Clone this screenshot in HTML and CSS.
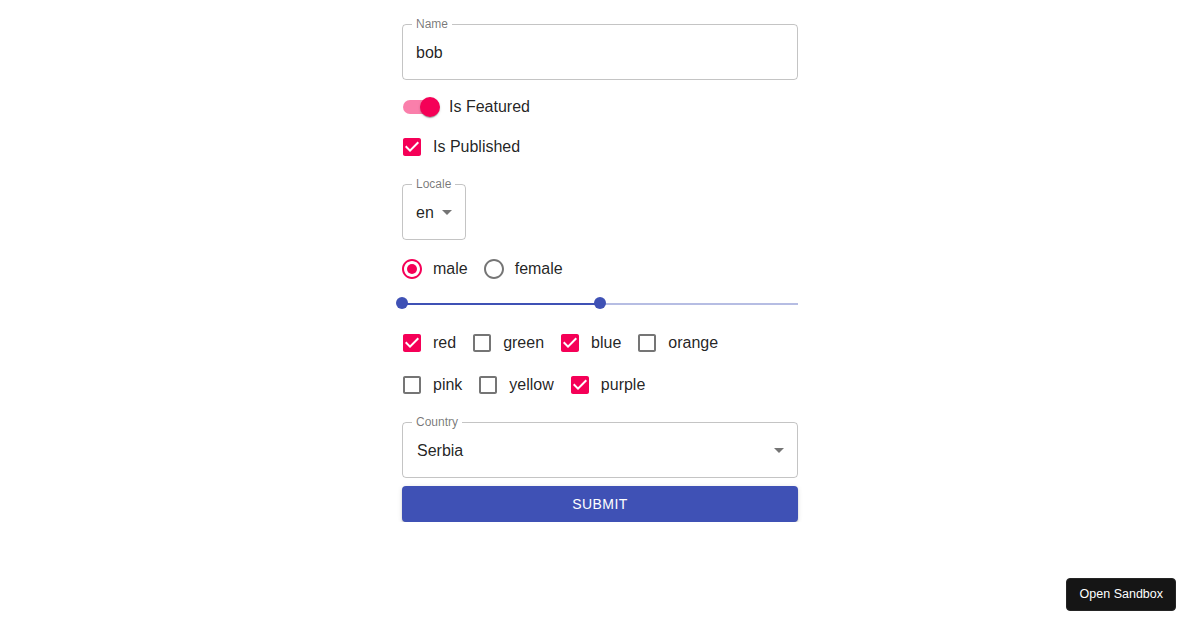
FILE: index.html
```html
<!DOCTYPE html>
<html>
<head>
<meta charset="utf-8">
<link rel="stylesheet" href="styles.css">
</head>
<body>
<form class="form">
  <div class="field">
    <span class="field-label">Name</span>
    <span class="field-value">bob</span>
  </div>

  <label class="control">
    <span class="switch"><span class="switch-track"><span class="switch-thumb"></span></span></span>
    <span class="control-text">Is Featured</span>
  </label>

  <label class="control">
    <span class="box"><svg viewBox="0 0 24 24" class="icon on"><path d="M19 3H5c-1.11 0-2 .9-2 2v14c0 1.1.89 2 2 2h14c1.11 0 2-.9 2-2V5c0-1.1-.89-2-2-2zm-9 14l-5-5 1.41-1.41L10 14.17l7.59-7.59L19 8l-9 9z"/></svg></span>
    <span class="control-text">Is Published</span>
  </label>

  <div class="field field-locale">
    <span class="field-label">Locale</span>
    <span class="field-value">en</span>
    <svg viewBox="0 0 24 24" class="arrow"><path d="M7 10l5 5 5-5z"/></svg>
  </div>

  <div class="group">
    <label class="control">
      <span class="box"><svg viewBox="0 0 24 24" class="icon on"><path d="M12 2C6.48 2 2 6.48 2 12s4.48 10 10 10 10-4.48 10-10S17.52 2 12 2zm0 18c-4.42 0-8-3.58-8-8s3.58-8 8-8 8 3.580 8 8-3.58 8-8 8z"/><circle cx="12" cy="12" r="5"/></svg></span>
      <span class="control-text">male</span>
    </label>
    <label class="control">
      <span class="box"><svg viewBox="0 0 24 24" class="icon off"><path d="M12 2C6.48 2 2 6.48 2 12s4.48 10 10 10 10-4.48 10-10S17.52 2 12 2zm0 18c-4.42 0-8-3.58-8-8s3.58-8 8-8 8 3.58 8 8-3.58 8-8 8z"/></svg></span>
      <span class="control-text">female</span>
    </label>
  </div>

  <div class="slider">
    <span class="slider-track"></span>
    <span class="slider-rail"></span>
    <span class="slider-thumb" style="left: 0%"></span>
    <span class="slider-thumb" style="left: 50%"></span>
  </div>

  <div class="group wrap">
    <label class="control">
      <span class="box"><svg viewBox="0 0 24 24" class="icon on"><path d="M19 3H5c-1.11 0-2 .9-2 2v14c0 1.1.89 2 2 2h14c1.11 0 2-.9 2-2V5c0-1.1-.89-2-2-2zm-9 14l-5-5 1.41-1.41L10 14.17l7.59-7.59L19 8l-9 9z"/></svg></span>
      <span class="control-text">red</span>
    </label>
    <label class="control">
      <span class="box"><svg viewBox="0 0 24 24" class="icon off"><path d="M19 5v14H5V5h14m0-2H5c-1.1 0-2 .9-2 2v14c0 1.1.9 2 2 2h14c1.1 0 2-.9 2-2V5c0-1.1-.9-2-2-2z"/></svg></span>
      <span class="control-text">green</span>
    </label>
    <label class="control">
      <span class="box"><svg viewBox="0 0 24 24" class="icon on"><path d="M19 3H5c-1.11 0-2 .9-2 2v14c0 1.1.89 2 2 2h14c1.11 0 2-.9 2-2V5c0-1.1-.89-2-2-2zm-9 14l-5-5 1.41-1.41L10 14.17l7.59-7.59L19 8l-9 9z"/></svg></span>
      <span class="control-text">blue</span>
    </label>
    <label class="control">
      <span class="box"><svg viewBox="0 0 24 24" class="icon off"><path d="M19 5v14H5V5h14m0-2H5c-1.1 0-2 .9-2 2v14c0 1.1.9 2 2 2h14c1.1 0 2-.9 2-2V5c0-1.1-.9-2-2-2z"/></svg></span>
      <span class="control-text">orange</span>
    </label>
    <label class="control">
      <span class="box"><svg viewBox="0 0 24 24" class="icon off"><path d="M19 5v14H5V5h14m0-2H5c-1.1 0-2 .9-2 2v14c0 1.1.9 2 2 2h14c1.1 0 2-.9 2-2V5c0-1.1-.9-2-2-2z"/></svg></span>
      <span class="control-text">pink</span>
    </label>
    <label class="control">
      <span class="box"><svg viewBox="0 0 24 24" class="icon off"><path d="M19 5v14H5V5h14m0-2H5c-1.1 0-2 .9-2 2v14c0 1.1.9 2 2 2h14c1.1 0 2-.9 2-2V5c0-1.1-.9-2-2-2z"/></svg></span>
      <span class="control-text">yellow</span>
    </label>
    <label class="control">
      <span class="box"><svg viewBox="0 0 24 24" class="icon on"><path d="M19 3H5c-1.11 0-2 .9-2 2v14c0 1.1.89 2 2 2h14c1.11 0 2-.9 2-2V5c0-1.1-.89-2-2-2zm-9 14l-5-5 1.41-1.41L10 14.17l7.59-7.59L19 8l-9 9z"/></svg></span>
      <span class="control-text">purple</span>
    </label>
  </div>

  <div class="field field-country">
    <span class="field-label">Country</span>
    <span class="field-value country-value">Serbia</span>
    <svg viewBox="0 0 24 24" class="arrow"><path d="M7 10l5 5 5-5z"/></svg>
  </div>

  <button type="button" class="submit">Submit</button>
</form>

<a class="sandbox-btn">Open Sandbox</a>
</body>
</html>
```

FILE: styles.css
```css
* { box-sizing: border-box; }

html, body {
  margin: 0;
  padding: 0;
  background: #fff;
}

body {
  font-family: "Liberation Sans", Arial, sans-serif;
  color: rgba(0, 0, 0, 0.87);
}

.form {
  width: 396px;
  margin: 0 auto;
  padding-top: 24px;
  display: flex;
  flex-direction: column;
  align-items: flex-start;
}

.field {
  position: relative;
  width: 100%;
  height: 56px;
  border: 1px solid rgba(0, 0, 0, 0.23);
  border-radius: 4px;
  padding: 0 13px;
  display: flex;
  align-items: center;
  margin-bottom: 8px;
}

.field-label {
  position: absolute;
  top: -8px;
  left: 9px;
  padding: 0 4px;
  background: #fff;
  font-size: 12px;
  line-height: 14px;
  color: rgba(0, 0, 0, 0.54);
}

.field-value {
  font-size: 16px;
  line-height: 19px;
  color: rgba(0, 0, 0, 0.87);
}

.country-value {
  padding-left: 1px;
}

.field-locale {
  width: 64px;
  margin-top: 16px;
  padding-right: 6px;
}

.field-country {
  margin-top: 16px;
  padding-right: 6px;
}

.arrow {
  width: 24px;
  height: 24px;
  margin-left: auto;
  fill: rgba(0, 0, 0, 0.54);
  flex-shrink: 0;
}

.control {
  display: inline-flex;
  align-items: center;
  margin-left: -11px;
  margin-right: 16px;
  cursor: pointer;
}

.control-text {
  font-size: 16px;
  line-height: 24px;
  color: rgba(0, 0, 0, 0.87);
}

.box {
  width: 42px;
  height: 42px;
  padding: 9px;
  display: flex;
}

.icon {
  width: 24px;
  height: 24px;
}

.icon.on { fill: #f50057; }
.icon.off { fill: rgba(0, 0, 0, 0.54); }

.switch {
  width: 58px;
  height: 38px;
  padding: 12px;
  display: flex;
  align-items: center;
}

.switch-track {
  width: 34px;
  height: 14px;
  border-radius: 7px;
  background: rgba(245, 0, 87, 0.5);
  display: flex;
  align-items: center;
  justify-content: flex-end;
}

.switch-thumb {
  width: 20px;
  height: 20px;
  border-radius: 50%;
  background: #f50057;
  flex-shrink: 0;
  margin-right: -3px;
  box-shadow: 0px 2px 1px -1px rgba(0,0,0,0.2), 0px 1px 1px 0px rgba(0,0,0,0.14), 0px 1px 3px 0px rgba(0,0,0,0.12);
}

.group {
  display: flex;
  width: 100%;
}

.group.wrap {
  flex-wrap: wrap;
  margin-top: 4px;
}

.slider {
  position: relative;
  width: 100%;
  height: 28px;
  display: flex;
  align-items: center;
  padding-bottom: 1px;
}

.slider-track {
  width: 50%;
  height: 2px;
  background: #3f51b5;
}

.slider-rail {
  flex: 1;
  height: 2px;
  background: #3f51b5;
  opacity: 0.38;
}

.slider-thumb {
  position: absolute;
  top: 7px;
  width: 12px;
  height: 12px;
  margin-left: -6px;
  border-radius: 50%;
  background: #3f51b5;
}

.submit {
  width: 100%;
  height: 36px;
  border: 0;
  border-radius: 4px;
  background: #3f51b5;
  color: #fff;
  font-family: "Liberation Sans", Arial, sans-serif;
  font-size: 14px;
  font-weight: 400;
  letter-spacing: 0.02857em;
  text-transform: uppercase;
  line-height: 1.75;
  box-shadow: 0px 3px 1px -2px rgba(0,0,0,0.2), 0px 2px 2px 0px rgba(0,0,0,0.14), 0px 1px 5px 0px rgba(0,0,0,0.12);
  cursor: pointer;
}

.sandbox-btn {
  position: fixed;
  right: 24px;
  bottom: 19px;
  height: 33px;
  padding: 0 12px 0 13px;
  display: flex;
  align-items: center;
  background: #151515;
  border: 1px solid #242424;
  border-radius: 4px;
  color: #fff;
  font-family: "Liberation Sans", Arial, sans-serif;
  font-size: 12.5px;
  line-height: 1;
}
```
